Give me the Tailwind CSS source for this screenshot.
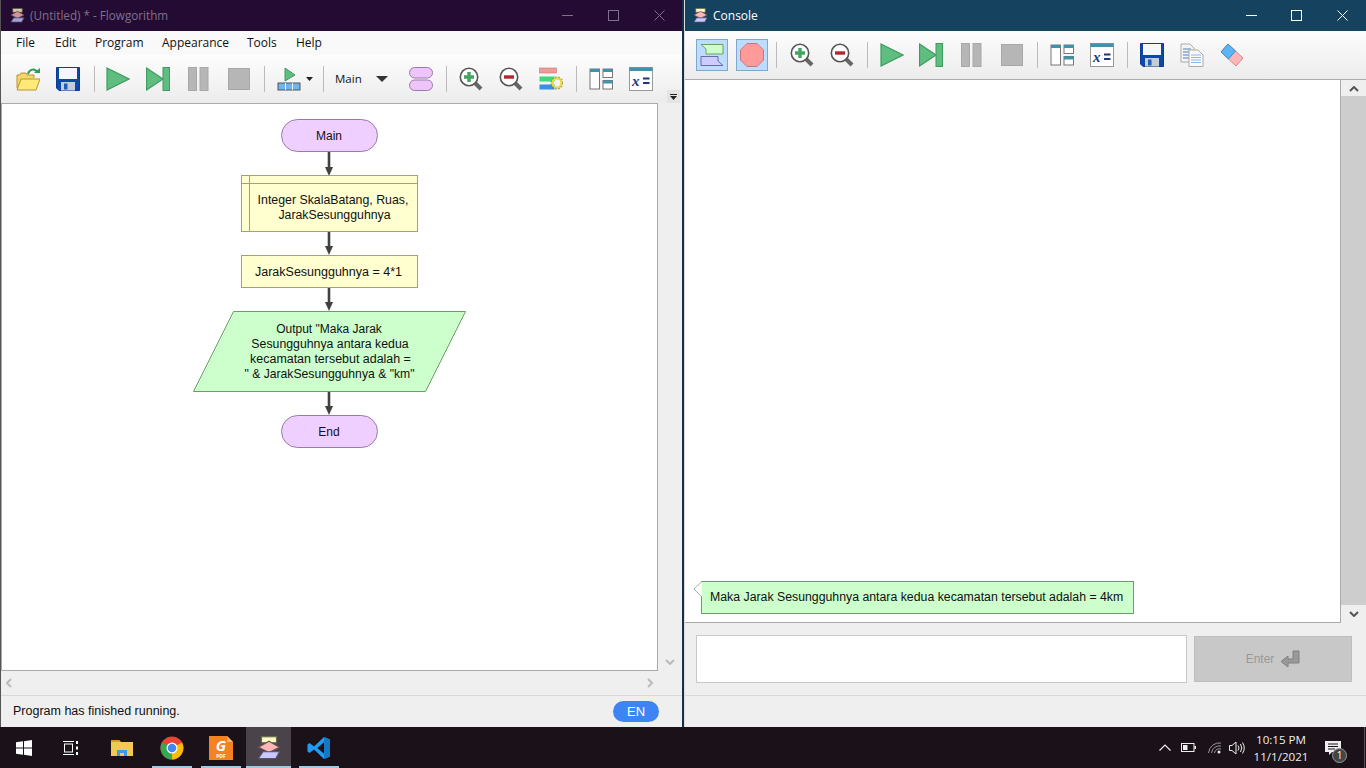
<!DOCTYPE html>
<html lang="en">
<head>
    <meta charset="UTF-8">
    <title>Flowgorithm</title>
    <script src="https://cdn.jsdelivr.net/npm/@tailwindcss/browser@4"></script>
</head>
<body class="overflow-hidden bg-[#1a1218] font-['Liberation_Sans',sans-serif]">

    <!-- shared toolbar icons -->
    <svg class="hidden">
        <symbol id="logo" viewBox="0 0 16 16">
            <rect x="3" y="0.5" width="10" height="4" fill="#ffffc8" stroke="#6b6b50" stroke-width="0.8"/>
            <path d="M8 3.5 L15 7.5 L8 11 L1 7.5Z" fill="#ffb6b6" stroke="#6b5050" stroke-width="0.8"/>
            <path d="M4 10.5 H15 L12.5 15 H1Z" fill="#c8c8ff" stroke="#55557a" stroke-width="0.8"/>
        </symbol>
        <symbol id="open" viewBox="0 0 24 24">
            <path d="M1 21 V8 H4 L5 6 H10 L11 8 H18 V11" fill="#f5d76a" stroke="#b8962e"/>
            <path d="M1 23 L5 12 H24 L20 23Z" fill="#ffe978" stroke="#b8962e"/>
            <path d="M12 7 C13 2 19 1 21 5" fill="none" stroke="#2f9a57" stroke-width="2"/>
            <path d="M18 6 H24 V1Z" fill="#2f9a57"/>
        </symbol>
        <symbol id="save" viewBox="0 0 24 24">
            <path d="M0.5 0.5 H23.5 V23.5 H3 L0.5 21Z" fill="#0d47a8" stroke="#0a3c8f"/>
            <rect x="3" y="1" width="18" height="11" fill="#f4f7fb"/>
            <rect x="5" y="15" width="14" height="8.5" fill="#c4ccd4"/>
            <rect x="8" y="16.5" width="3.5" height="6" fill="#1f5fb4"/>
        </symbol>
        <symbol id="play" viewBox="0 0 24 24">
            <path d="M1 1 L23 12 L1 23Z" fill="#5fbd7f" stroke="#3d9c60" stroke-width="1.2"/>
        </symbol>
        <symbol id="step" viewBox="0 0 24 24">
            <path d="M0.5 1 L17 12 L0.5 23Z" fill="#5fbd7f" stroke="#3d9c60" stroke-width="1.2"/>
            <rect x="17" y="0.5" width="6.5" height="23" fill="#5fbd7f" stroke="#3d9c60"/>
        </symbol>
        <symbol id="pause" viewBox="0 0 24 24">
            <rect x="2.5" y="0.5" width="8" height="23" fill="#b6b6b6" stroke="#a8a8a8"/>
            <rect x="14" y="0.5" width="8" height="23" fill="#b6b6b6" stroke="#a8a8a8"/>
        </symbol>
        <symbol id="stop" viewBox="0 0 24 24">
            <rect x="2.5" y="1.5" width="21" height="21" fill="#b6b6b6" stroke="#a8a8a8"/>
        </symbol>
        <symbol id="zoomin" viewBox="0 0 24 24">
            <path d="M15 15 L22 22" stroke="#666" stroke-width="4"/>
            <circle cx="10" cy="10" r="8.7" fill="#fff" stroke="#555" stroke-width="1.6"/>
            <path d="M10 5 V15 M5 10 H15" stroke="#43a35f" stroke-width="3.4"/>
        </symbol>
        <symbol id="zoomout" viewBox="0 0 24 24">
            <path d="M15 15 L22 22" stroke="#666" stroke-width="4"/>
            <circle cx="10" cy="10" r="8.7" fill="#fff" stroke="#555" stroke-width="1.6"/>
            <path d="M5 10 H15" stroke="#b3262e" stroke-width="3.4"/>
        </symbol>
        <symbol id="layout" viewBox="0 0 24 24">
            <rect x="1" y="2" width="9.5" height="20" fill="#fff" stroke="#777"/>
            <rect x="1" y="2" width="9.5" height="3" fill="#3f92ab"/>
            <rect x="14" y="2" width="9.5" height="8.5" fill="#fff" stroke="#777"/>
            <rect x="14" y="2" width="9.5" height="3" fill="#3f92ab"/>
            <rect x="14" y="13.5" width="9.5" height="8.5" fill="#fff" stroke="#777"/>
            <rect x="14" y="13.5" width="9.5" height="3" fill="#3f92ab"/>
        </symbol>
        <symbol id="vars" viewBox="0 0 24 24">
            <rect x="0.5" y="0.5" width="23" height="23" fill="#fff" stroke="#999"/>
            <rect x="0.5" y="0.5" width="23" height="3.5" fill="#3f92ab"/>
            <text x="3" y="19" font-family="Liberation Serif" font-style="italic" font-weight="700" font-size="15" fill="#1a3a80">x</text>
            <path d="M14 11.5 H20.5 M14 16 H20.5" stroke="#1a3a80" stroke-width="2"/>
        </symbol>
    </svg>

    <div class="flex h-[727px] w-[1366px]">

        <!-- main window -->
        <div class="flex flex-col w-[682px] h-full bg-[#efefef] border-l border-[#555]">
            <div class="flex items-center h-[31px] bg-[#240b33] shrink-0 text-[11.7px] text-[#80708a] font-['Open_Sans',sans-serif]">
                <svg class="w-[15px] h-[15px] ml-[9px] opacity-80"><use href="#logo"/></svg>
                <span class="ml-[5px]">(Untitled) * - Flowgorithm</span>
                <div class="ml-auto flex items-center pr-[17px]">
                    <div class="w-[11px] h-px bg-[#80708a]"></div>
                    <div class="w-[11px] h-[11px] border border-[#80708a] ml-[35px]"></div>
                    <svg class="w-[11px] h-[11px] ml-[35px]" viewBox="0 0 11 11"><path d="M0.5 0.5 L10.5 10.5 M10.5 0.5 L0.5 10.5" stroke="#80708a"/></svg>
                </div>
            </div>
            <div class="flex items-center h-[24px] bg-[#f9f9f9] pl-[15px] shrink-0 text-[12px] text-[#111] font-['Open_Sans',sans-serif]">
                <span class="w-[39px]">File</span>
                <span class="w-[40px]">Edit</span>
                <span class="w-[67px]">Program</span>
                <span class="w-[85px]">Appearance</span>
                <span class="w-[49px]">Tools</span>
                <span>Help</span>
            </div>
            <div class="relative flex items-center h-[48px] shrink-0 pl-[7px] bg-gradient-to-b from-[#fdfdfd] to-[#ececec]">
                <div class="w-10 flex justify-center"><svg class="w-6 h-6"><use href="#open"/></svg></div>
                <div class="w-10 flex justify-center"><svg class="w-6 h-6"><use href="#save"/></svg></div>
                <div class="w-px h-[26px] bg-[#bbb] ml-[6px] mr-[3px]"></div>
                <div class="w-10 flex justify-center"><svg class="w-6 h-6"><use href="#play"/></svg></div>
                <div class="w-10 flex justify-center"><svg class="w-6 h-6"><use href="#step"/></svg></div>
                <div class="w-10 flex justify-center"><svg class="w-6 h-6"><use href="#pause"/></svg></div>
                <div class="w-10 flex justify-center"><svg class="w-6 h-6"><use href="#stop"/></svg></div>
                <div class="w-px h-[26px] bg-[#bbb] ml-[6px]"></div>
                <svg class="w-6 h-6 ml-[12px]" viewBox="0 0 24 24">
                    <path d="M8 1 L18 8 L8 14Z" fill="#5fbd7f" stroke="#3d9c60"/>
                    <rect x="1" y="16" width="22" height="7" fill="#6fb5ef" stroke="#555"/>
                    <path d="M8.5 16 V23 M15.5 16 V23" stroke="#e8f2fb"/>
                </svg>
                <svg class="w-[7px] h-[4px] ml-[5px]" viewBox="0 0 7 4"><path d="M0 0 H7 L3.5 4Z" fill="#222"/></svg>
                <div class="w-px h-[26px] bg-[#bbb] ml-[10px]"></div>
                <span class="ml-[11px] w-[41px] text-[11.5px] text-[#111] font-['Open_Sans',sans-serif]">Main</span>
                <svg class="w-[12px] h-[6px]" viewBox="0 0 12 6"><path d="M0 0 H12 L6 6Z" fill="#333"/></svg>
                <svg class="w-6 h-6 ml-[21px]" viewBox="0 0 24 24">
                    <rect x="0.5" y="0.5" width="23" height="10.5" rx="5.2" fill="#efc4fa" stroke="#9a7aa8"/>
                    <rect x="0.5" y="13" width="23" height="10.5" rx="5.2" fill="#efc4fa" stroke="#9a7aa8"/>
                </svg>
                <div class="w-px h-[26px] bg-[#bbb] ml-[13px]"></div>
                <svg class="w-6 h-6 ml-[12px]"><use href="#zoomin"/></svg>
                <svg class="w-6 h-6 ml-4"><use href="#zoomout"/></svg>
                <svg class="w-6 h-6 ml-4" viewBox="0 0 24 24">
                    <rect x="0.5" y="1" width="17" height="5" fill="#f09a9a" stroke="#c07a7a" stroke-width="0.6"/>
                    <rect x="0.5" y="9.5" width="15" height="5" fill="#3fd878"/>
                    <rect x="0.5" y="17.5" width="15" height="5" fill="#3a8fe0"/>
                    <circle cx="18" cy="16" r="4.6" fill="none" stroke="#e8d838" stroke-width="2.4"/>
                    <circle cx="18" cy="16" r="6" fill="none" stroke="#8a7a20" stroke-width="1" stroke-dasharray="1.6 1.6"/>
                </svg>
                <div class="w-px h-[26px] bg-[#bbb] ml-[13px]"></div>
                <svg class="w-6 h-6 ml-[12px]"><use href="#layout"/></svg>
                <svg class="w-6 h-6 ml-4"><use href="#vars"/></svg>
                <div class="absolute right-[2px] bottom-0 w-[13px] h-[13px] bg-[#e4e4e4] flex flex-col items-center justify-center gap-px">
                    <div class="w-[7px] h-px bg-[#222]"></div>
                    <svg class="w-[7px] h-[4px]" viewBox="0 0 7 4"><path d="M0 0 H7 L3.5 4Z" fill="#222"/></svg>
                </div>
            </div>

            <div class="flex flex-1 min-h-0">
                <!-- flowchart canvas -->
                <div class="w-[657px] h-[568px] bg-white border border-[#aaa] overflow-hidden">
                    <svg width="655" height="566" viewBox="2 104 655 566" font-family="Liberation Sans" font-size="12" fill="#111" text-anchor="middle">
                        <g stroke="#404040" stroke-width="2.6">
                            <path d="M329 152 V170 M329 232 V250 M329 288 V306 M329 391 V410"/>
                        </g>
                        <g fill="#404040">
                            <path d="M325 167 H333 L329 176Z"/>
                            <path d="M325 246 H333 L329 255Z"/>
                            <path d="M325 302 H333 L329 311Z"/>
                            <path d="M325 406 H333 L329 415Z"/>
                        </g>
                        <rect x="281.5" y="119.5" width="96" height="32" rx="16" fill="#eecfff" stroke="#9a7aa8"/>
                        <text x="329" y="140">Main</text>
                        <rect x="241.5" y="175.5" width="176" height="56" fill="#ffffd0" stroke="#a3a36e"/>
                        <path d="M249.5 176 V231 M242 183.5 H417" stroke="#a3a36e" fill="none"/>
                        <text x="333" y="203.500" font-size="12.33">Integer SkalaBatang, Ruas,</text>
                        <text x="334.500" y="218.500" font-size="12.3">JarakSesungguhnya</text>
                        <rect x="241.5" y="255.5" width="176" height="32" fill="#ffffd0" stroke="#a3a36e"/>
                        <text x="328.500" y="276" font-size="12.5">JarakSesungguhnya = 4*1</text>
                        <path d="M233.500 311.500 H465.500 L425.500 391.500 H193.500Z" fill="#ccffcc" stroke="#6a9e6a"/>
                        <text x="329" y="332.500">Output "Maka Jarak</text>
                        <text x="330" y="347.500" font-size="12.3">Sesungguhnya antara kedua</text>
                        <text x="330.500" y="362.500" font-size="12.45">kecamatan tersebut adalah =</text>
                        <text x="329.500" y="377.500" font-size="12.2">" &amp; JarakSesungguhnya &amp; "km"</text>
                        <rect x="281.5" y="415.5" width="96" height="32" rx="16" fill="#eecfff" stroke="#9a7aa8"/>
                        <text x="329" y="436">End</text>
                    </svg>
                </div>
                <div class="flex-1 flex flex-col items-center justify-end pb-[6px]">
                    <svg class="w-[10px] h-[6px]" viewBox="0 0 10 6"><path d="M1 1 L5 5 L9 1" fill="none" stroke="#bbb" stroke-width="2"/></svg>
                </div>
            </div>
            <div class="flex items-center justify-between h-[25px] pl-[5px] pr-[29px] shrink-0 border-b border-[#d8d8d8]">
                <svg class="w-[6px] h-[10px]" viewBox="0 0 6 10"><path d="M5 1 L1 5 L5 9" fill="none" stroke="#bbb" stroke-width="2"/></svg>
                <svg class="w-[6px] h-[10px]" viewBox="0 0 6 10"><path d="M1 1 L5 5 L1 9" fill="none" stroke="#bbb" stroke-width="2"/></svg>
            </div>
            <div class="flex items-center justify-between h-[31px] pl-3 pr-[23px] shrink-0">
                <span class="text-[12.500px] text-[#111]">Program has finished running.</span>
                <span class="w-[46px] h-[21px] rounded-full bg-[#3f84f5] text-white text-[13px] flex items-center justify-center">EN</span>
            </div>
        </div>

        <div class="w-[2px] bg-[#14304a]"></div>

        <!-- console window -->
        <div class="flex flex-col flex-1 h-full bg-[#efefef] border-l border-[#dcdcdc]">
            <div class="flex items-center h-[31px] bg-[#14425f] shrink-0 text-[12px] text-white font-['Open_Sans',sans-serif]">
                <svg class="w-[15px] h-[15px] ml-2"><use href="#logo"/></svg>
                <span class="ml-[5px]">Console</span>
                <div class="ml-auto flex items-center pr-[18px]">
                    <div class="w-[11px] h-px bg-white"></div>
                    <div class="w-[11px] h-[11px] border border-white ml-[34px]"></div>
                    <svg class="w-[11px] h-[11px] ml-[35px]" viewBox="0 0 11 11"><path d="M0.5 0.5 L10.5 10.5 M10.5 0.5 L0.5 10.5" stroke="#fff"/></svg>
                </div>
            </div>
            <div class="flex items-center h-[49px] shrink-0 pl-[11px] bg-gradient-to-b from-[#fdfdfd] to-[#ececec] border-b border-[#aaa]">
                <div class="w-[32px] h-[32px] bg-[#bddcff] border border-[#7fa9cc] flex items-center justify-center">
                    <svg class="w-6 h-6" viewBox="0 0 24 24">
                        <path d="M1 1.500 H23 V11 H6 V6Z" fill="#ccffcc" stroke="#6a9e6a"/>
                        <path d="M1 13.500 H18 V18 L23 22.500 H1Z" fill="#ccccff" stroke="#6a6aa5"/>
                    </svg>
                </div>
                <div class="w-[32px] h-[32px] ml-2 bg-[#bddcff] border border-[#7fa9cc] flex items-center justify-center">
                    <svg class="w-6 h-6" viewBox="0 0 24 24"><path d="M7 0.5 H17 L23.500 7 V17 L17 23.500 H7 L0.500 17 V7Z" fill="#ff9a9a" stroke="#c07a7a"/></svg>
                </div>
                <div class="w-px h-[26px] bg-[#bbb] ml-[8px]"></div>
                <svg class="w-6 h-6 ml-[13px]"><use href="#zoomin"/></svg>
                <svg class="w-6 h-6 ml-4"><use href="#zoomout"/></svg>
                <div class="w-px h-[26px] bg-[#bbb] ml-[13px]"></div>
                <svg class="w-6 h-6 ml-[12px]"><use href="#play"/></svg>
                <svg class="w-6 h-6 ml-[15px]"><use href="#step"/></svg>
                <svg class="w-6 h-6 ml-4"><use href="#pause"/></svg>
                <svg class="w-6 h-6 ml-4"><use href="#stop"/></svg>
                <div class="w-px h-[26px] bg-[#bbb] ml-[14px]"></div>
                <svg class="w-6 h-6 ml-[12px]"><use href="#layout"/></svg>
                <svg class="w-6 h-6 ml-4"><use href="#vars"/></svg>
                <div class="w-px h-[26px] bg-[#bbb] ml-[13px]"></div>
                <svg class="w-6 h-6 ml-[12px]"><use href="#save"/></svg>
                <svg class="w-6 h-6 ml-4" viewBox="0 0 24 24">
                    <path d="M1 1 H10 L14 5 V19 H1Z" fill="#f4f4f4" stroke="#aaa"/>
                    <path d="M3 6 H11 M3 9 H11 M3 12 H11 M3 15 H11" stroke="#4f7fc0"/>
                    <path d="M9 7 H18 L23 12 V23.500 H9Z" fill="#fafafa" stroke="#aaa"/>
                    <path d="M11 12 H21 M11 14.500 H21 M11 17 H21 M11 19.500 H21" stroke="#8ab8ec"/>
                </svg>
                <svg class="w-6 h-6 ml-4" viewBox="0 0 24 24">
                    <path d="M8 1 L23 15 L16 23 L1 9Z" fill="#ffb6b6" stroke="#d08a8a"/>
                    <path d="M8 1 L15.500 8 L8.500 16 L1 9Z" fill="#5cb4f5" stroke="#3f8fd0"/>
                </svg>
            </div>

            <div class="flex flex-1 min-h-0">
                <div class="w-[656px] flex flex-col justify-end bg-white border-r border-b border-[#aaa] pb-[8px] pl-[16px]">
                    <div class="relative w-[433px] h-[33px] bg-[#ccffcc] border border-[#6a9e6a] flex items-center pl-[8px] text-[12.300px] text-[#111]">
                        Maka Jarak Sesungguhnya antara kedua kecamatan tersebut adalah = 4km
                        <svg class="absolute left-[-9px] top-[-1px] w-[10px] h-[18px]" viewBox="0 0 10 18"><path d="M9 0.500 L1 8 L9 16" fill="#fff" stroke="#9ab89a"/><path d="M9.500 1 V15" stroke="#ccffcc" stroke-width="1"/></svg>
                    </div>
                </div>
                <div class="flex-1 flex flex-col items-center">
                    <svg class="w-[10px] h-[6px] mt-[6px]" viewBox="0 0 10 6"><path d="M1 5 L5 1 L9 5" fill="none" stroke="#555" stroke-width="2"/></svg>
                    <div class="w-full flex-1 bg-[#cdcdcd] mt-[4px]"></div>
                    <div class="h-[18px] flex items-center">
                        <svg class="w-[10px] h-[6px]" viewBox="0 0 10 6"><path d="M1 1 L5 5 L9 1" fill="none" stroke="#555" stroke-width="2"/></svg>
                    </div>
                </div>
            </div>

            <div class="h-[73px] shrink-0 flex items-center pl-[11px] border-b border-[#d8d8d8]">
                <div class="w-[491px] h-[48px] bg-white border border-[#c8c8c8]"></div>
                <div class="ml-[7px] w-[158px] h-[46px] bg-[#c8c8c8] border border-[#bdbdbd] flex items-center justify-center gap-[6px] text-[12px] text-[#999]">
                    Enter
                    <svg class="w-[20px] h-[18px]" viewBox="0 0 20 18"><path d="M13 1 H19 V13 H8 V17 L1 11.500 L8 6 V9 H13Z" fill="#999" stroke="#808080"/></svg>
                </div>
            </div>
            <div class="h-[31px] shrink-0"></div>
        </div>
    </div>

    <!-- taskbar -->
    <div class="flex items-center h-[41px] w-[1366px] bg-[#1a1218] text-[11.6px] text-[#eee] font-['Open_Sans',sans-serif]">
        <svg class="w-4 h-4 ml-4" viewBox="0 0 16 16"><path d="M0 2.300 L7 1.300 V7.500 H0Z M8 1.200 L16 0 V7.500 H8Z M0 8.500 H7 V14.700 L0 13.700Z M8 8.500 H16 V16 L8 14.800Z" fill="#fff"/></svg>
        <svg class="w-4 h-4 ml-[31px]" viewBox="0 0 16 16" fill="none" stroke="#fff"><path d="M0 1.500 H11 M0 14.500 H11"/><rect x="1.500" y="4" width="8" height="8"/><path d="M14 1 V4 M14 6.500 V9.500 M14 12 V15" stroke-width="2"/></svg>
        <svg class="w-6 h-[18px] ml-[31px]" viewBox="0 0 24 18">
            <path d="M1 1 H9 L11 3 H23 V17 H1Z" fill="#f5c951"/>
            <path d="M1 1 H9 L10 3 H1Z" fill="#d99a2b"/>
            <path d="M7 17 V11 H17 V17 H14 V14 H10 V17Z" fill="#3f9be8"/>
        </svg>
        <svg class="w-6 h-6 ml-[26px]" viewBox="0 0 24 24">
            <circle cx="12" cy="12" r="11.500" fill="#ea4335"/>
            <path d="M12 12 L22 6.500 A11.500 11.500 0 0 1 12 23.500Z" fill="#fbbc05"/>
            <path d="M12 12 L12 23.500 A11.500 11.500 0 0 1 2 6.300Z" fill="#34a853"/>
            <circle cx="12" cy="12" r="5.500" fill="#fff"/>
            <circle cx="12" cy="12" r="4.300" fill="#4285f4"/>
        </svg>
        <div class="relative w-6 h-6 ml-[25px] bg-[#f58220] flex flex-col items-center">
            <span class="mt-[2px] h-[14px] text-[15px] leading-[14px] font-bold italic text-white">G</span>
            <span class="mt-px text-[5px] leading-[6px] font-bold text-white">PDF</span>
            <svg class="absolute top-0 right-0 w-[6px] h-[6px]" viewBox="0 0 6 6"><path d="M0 0 H6 V6Z" fill="#1a1218"/><path d="M0 0 L6 6 H0Z" fill="#fbb36a"/></svg>
        </div>
        <div class="relative ml-[13px] w-[45px] h-[41px] bg-[#4a4349] flex items-center justify-center">
            <svg class="w-[24px] h-[24px]"><use href="#logo"/></svg>
        </div>
        <svg class="w-6 h-6 ml-[16px]" viewBox="0 0 24 24">
            <path d="M17 1 L23 3.500 V20.500 L17 23 L7 13.500 L2.500 17 L0.500 15.500 V8.500 L2.500 7 L7 10.500Z" fill="#1f9cf0"/>
            <path d="M17 6.500 L10.500 12 L17 17.500Z" fill="#1a1218"/>
            <path d="M17 1 L23 3.500 V20.500 L17 23Z" fill="#1578c4"/>
            <path d="M17 6.500 V17.500 L10.500 12Z" fill="#1a1218"/>
        </svg>

        <svg class="w-3 h-[7px] ml-[828px]" viewBox="0 0 12 7"><path d="M0.500 6.500 L6 1 L11.500 6.500" fill="none" stroke="#eee" stroke-width="1.200"/></svg>
        <svg class="w-[15px] h-[9px] ml-[10px]" viewBox="0 0 15 9"><rect x="0.500" y="0.500" width="12.500" height="8" fill="none" stroke="#eee"/><rect x="2" y="2" width="4.500" height="5" fill="#eee"/><rect x="13.500" y="3" width="1.500" height="3" fill="#eee"/></svg>
        <svg class="w-[14px] h-[12px] ml-[12px]" viewBox="0 0 14 12" fill="none" stroke="#999"><path d="M0.500 11 A11 11 0 0 1 13 1 M3.500 11 A8 8 0 0 1 13 4 M6.500 11 A5 5 0 0 1 13 7"/><circle cx="11" cy="10" r="1.500" fill="#eee" stroke="none"/></svg>
        <svg class="w-4 h-[14px] ml-[7px]" viewBox="0 0 16 14" fill="none" stroke="#eee"><path d="M0.500 4.500 H3 L7 1 V13 L3 9.500 H0.500Z"/><path d="M9 4.500 Q11 7 9 9.500 M11.500 3 Q14 7 11.500 11 M13.500 1.500 Q17 7 13.500 12.500"/></svg>
        <div class="ml-[1px] w-[70px] flex flex-col items-center leading-[17px]">
            <span>10:15 PM</span>
            <span>11/1/2021</span>
        </div>
        <div class="relative ml-[9px] w-[16px] h-[14px]">
            <svg class="w-[16px] h-[14px]" viewBox="0 0 16 14"><path d="M0 0 H16 V11 H7 L4 14 V11 H0Z" fill="#eee"/><path d="M3 3 H13 M3 5.500 H13 M3 8 H10" stroke="#1a1218"/></svg>
            <span class="absolute left-[7px] top-[7px] w-[15px] h-[15px] rounded-full bg-[#444] border border-[#999] text-[10px] leading-[13px] text-center text-white">1</span>
        </div>
        <div class="ml-[23px] w-px h-[41px] bg-[#555]"></div>
    </div>

    <!-- running-app underlines -->
    <div class="fixed bottom-0 left-[152px] flex h-[2px]">
        <div class="w-[40px] bg-[#9ccbe8]"></div>
        <div class="w-[40px] ml-[9px] bg-[#9ccbe8]"></div>
        <div class="w-[45px] ml-[5px] bg-[#9ccbe8]"></div>
        <div class="w-[40px] ml-[8px] bg-[#9ccbe8]"></div>
    </div>
</body>
</html>
